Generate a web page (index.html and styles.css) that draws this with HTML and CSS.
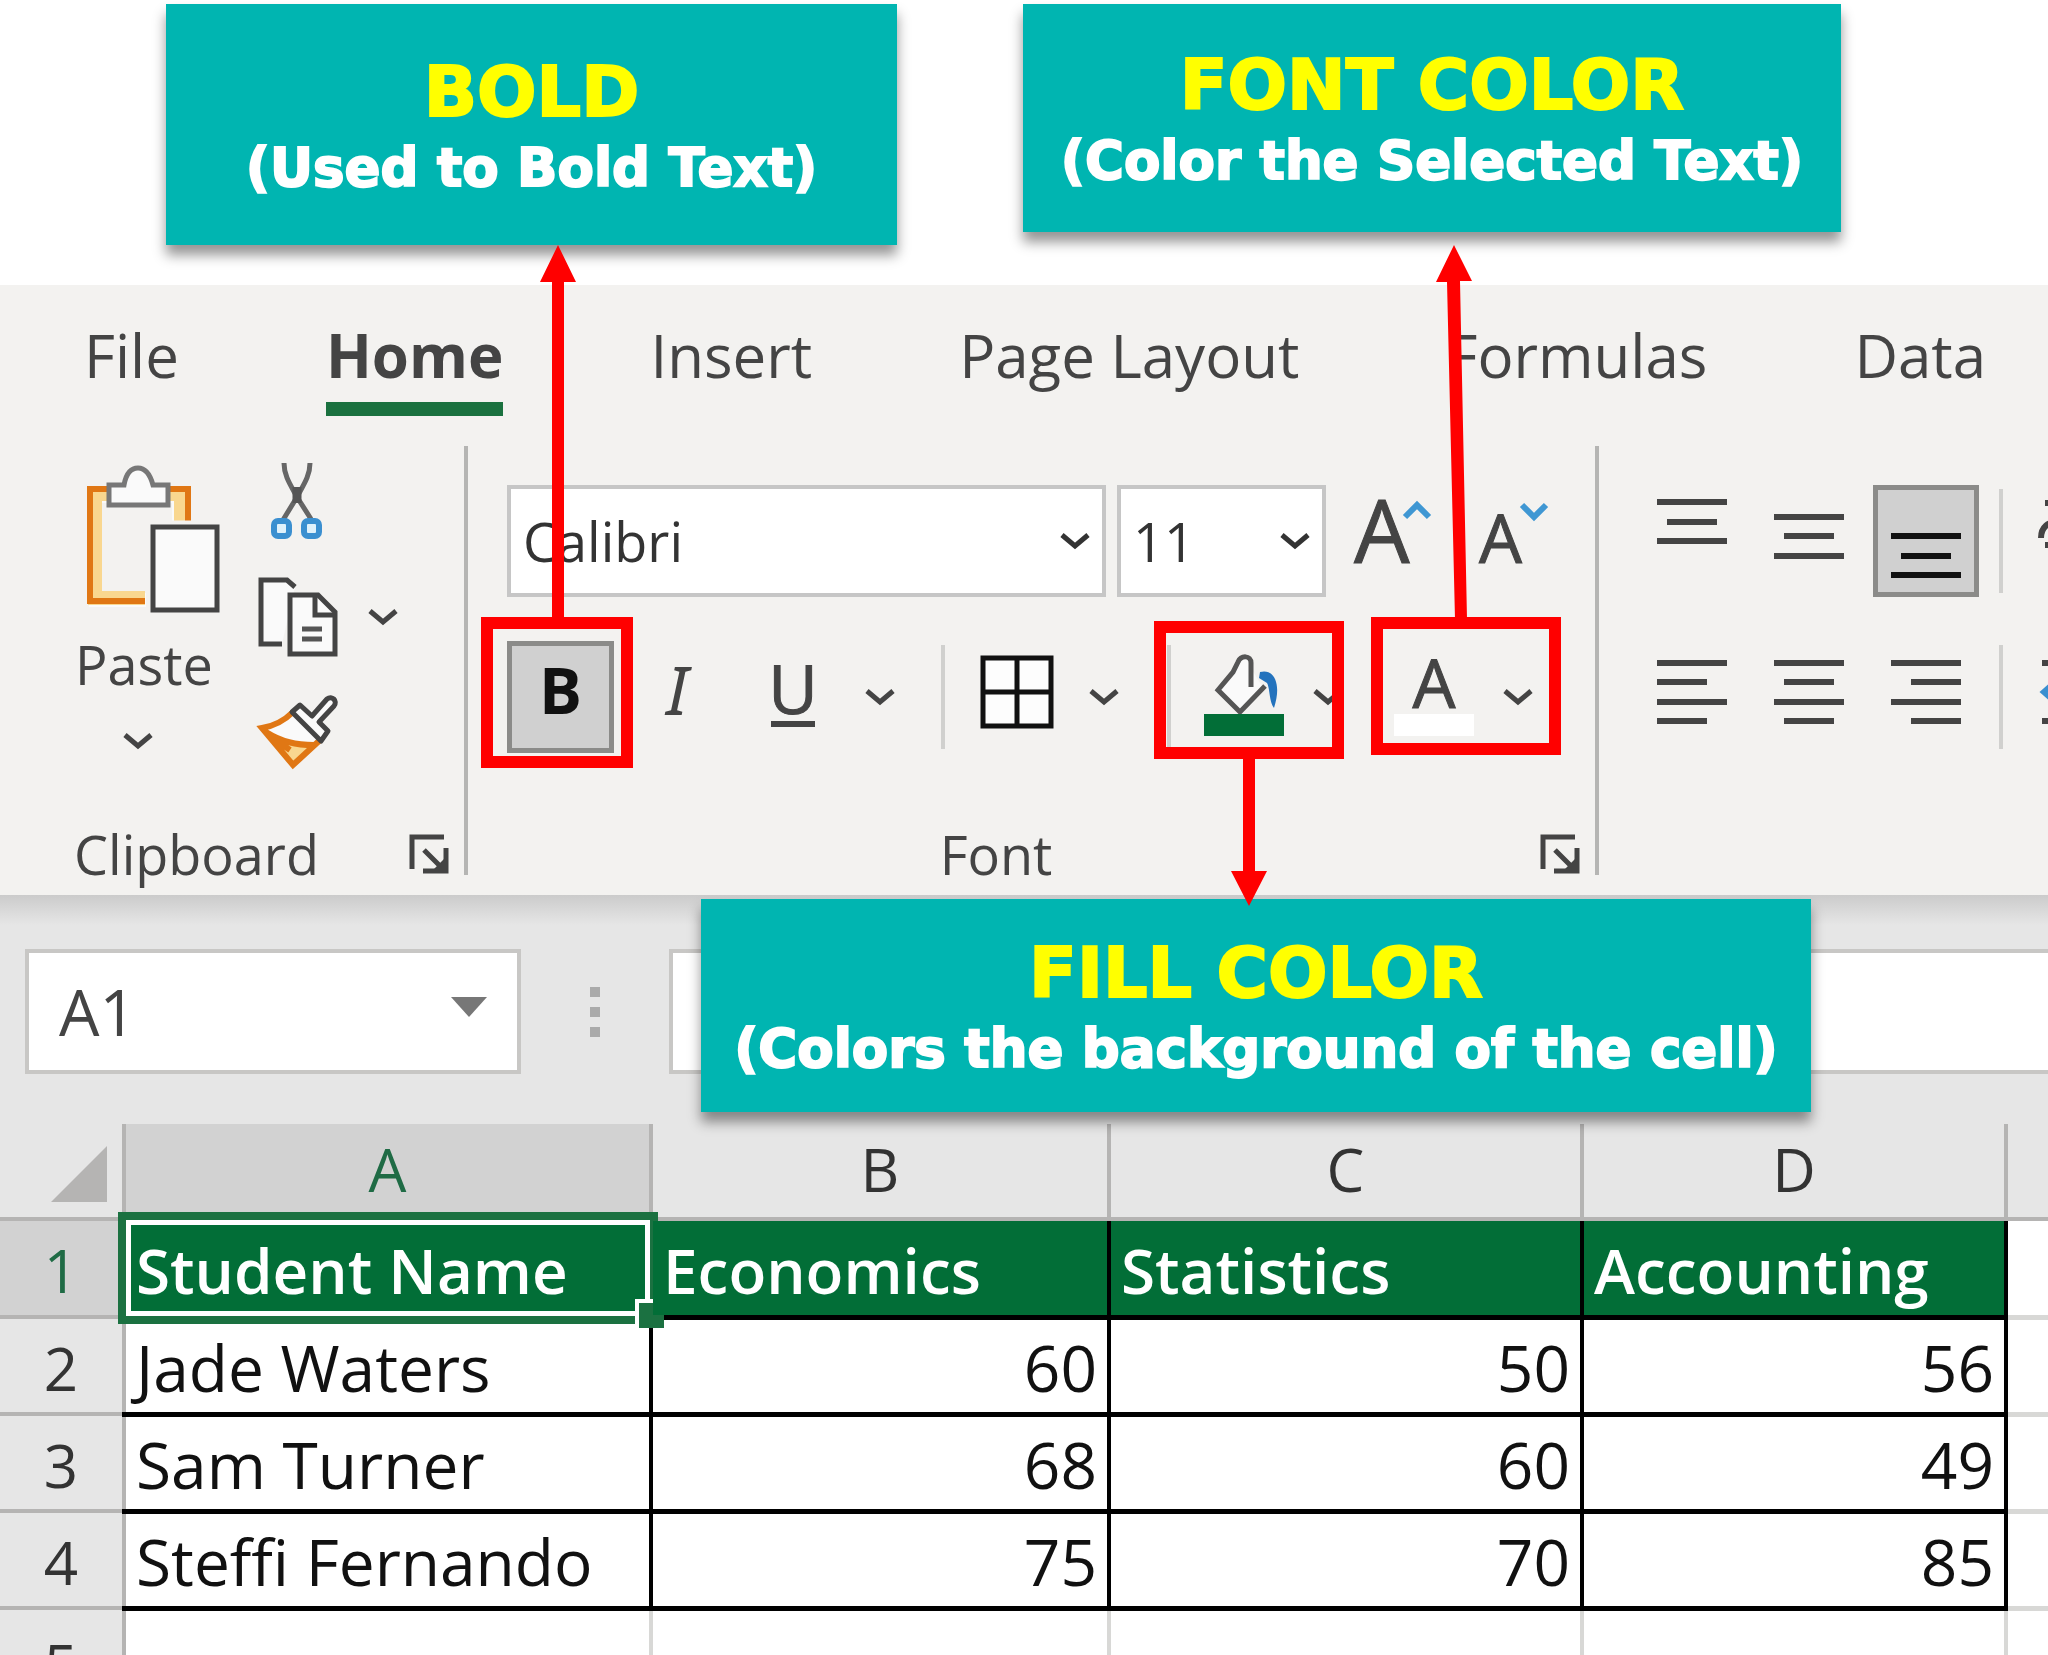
FILE: index.html
```html
<!DOCTYPE html>
<html lang="en">
<head>
<meta charset="utf-8">
<title>Excel font tools</title>
<link rel="stylesheet" href="styles.css">
</head>
<body>
<svg class="defs" aria-hidden="true">
  <symbol id="chevron" viewBox="0 0 30 18"><path d="M2 3l13 11L28 3" fill="none" stroke="currentColor" stroke-width="5"/></symbol>
  <symbol id="launcher" viewBox="0 0 40 40"><path d="M3 35V3h32M15 16l20 20M37 14v23H14" fill="none" stroke="currentColor" stroke-width="5"/><path d="M38 22v16H22z" fill="currentColor"/></symbol>
</svg>
<div class="app">
  <header class="notes">
    <section class="callout callout-bold"><h2>BOLD</h2><p>(Used to Bold Text)</p></section>
    <section class="callout callout-font"><h2>FONT COLOR</h2><p>(Color the Selected Text)</p></section>
  </header>

  <div class="ribbon">
    <nav class="tabs">
      <a href="#file">File</a>
      <a href="#home" class="active">Home</a>
      <a href="#insert">Insert</a>
      <a href="#layout">Page Layout</a>
      <a href="#formulas">Formulas</a>
      <a href="#data">Data</a>
    </nav>
    <div class="groups">
      <section class="group clipboard">
        <div class="clip-tools">
          <button class="paste" type="button">
            <svg width="152" height="150" viewBox="-18 0 152 150" aria-hidden="true">
              <path d="M3 26h98v36H86V40H16v90h44v14H3z" fill="#fafafa"/>
              <path d="M95 59V31H9v104h50" fill="none" stroke="#f9d78f" stroke-width="14"/>
              <path d="M102 59V26H4v112h55" fill="none" stroke="#e07714" stroke-width="6"/>
              <path d="M23 42V22h15C40 11 45 5 52 5s12 6 15 17h15v20z" fill="#fafafa" stroke="#777" stroke-width="5"/>
              <path d="M67 64h64v83H67z" fill="#fafafa" stroke="#f3f2f0" stroke-width="13"/>
              <path d="M67 64h64v83H67z" fill="#fafafa" stroke="#444" stroke-width="5"/>
            </svg>
            <span>Paste</span>
            <svg width="42" height="18" viewBox="0 0 42 18" aria-hidden="true"><path d="M2 3l13 11L28 3" fill="none" stroke="currentColor" stroke-width="5"/></svg>
          </button>
          <div class="clip-small">
            <button type="button" aria-label="Cut">
              <svg width="84" height="80" viewBox="0 0 84 80" aria-hidden="true">
                <path d="M28 3c0 14 8 24 13 34l14 22M54 3c0 14-8 24-13 34L27 60" fill="none" stroke="#666" stroke-width="5"/>
                <path d="M41 27v16" stroke="#555" stroke-width="9"/>
                <rect x="18" y="61" width="15" height="15" rx="4" fill="#dff1fb" stroke="#3a8fd0" stroke-width="6"/>
                <rect x="48" y="61" width="15" height="15" rx="4" fill="#dff1fb" stroke="#3a8fd0" stroke-width="6"/>
              </svg>
            </button>
            <button type="button" aria-label="Copy" class="copy">
              <svg width="84" height="80" viewBox="0 0 84 80" aria-hidden="true">
                <path d="M26 67H5V3h26l8 7" fill="#fafafa" stroke="#444" stroke-width="5"/>
                <path d="M34 18h28l17 17v42H34z" fill="#fafafa" stroke="#444" stroke-width="5"/>
                <path d="M59 18v20h20" fill="none" stroke="#444" stroke-width="5"/>
                <path d="M46 52h20M46 62h20" stroke="#555" stroke-width="5"/>
              </svg>
              <svg width="30" height="18" aria-hidden="true"><use href="#chevron"/></svg>
            </button>
            <button type="button" aria-label="Format Painter">
              <svg width="84" height="80" viewBox="0 0 84 80" aria-hidden="true">
                <path d="M37 18C28 27 18 32 6 34l31 37 26-24z" fill="#fafafa"/>
                <path d="M12 40c16 9 30 11 46 10L38 69z" fill="#f9d78f"/>
                <path d="M37 18C28 27 18 32 6 34l31 37 26-24M10 38c16 10 30 13 48 13M12 41l22 15" fill="none" stroke="#e07714" stroke-width="6"/>
                <path d="M36 18l8-7 12 11 15-17c5-4 11 2 7 7L63 28l9 9-7 10z" fill="#fafafa" stroke="#444" stroke-width="5" stroke-linejoin="round"/>
              </svg>
            </button>
          </div>
        </div>
        <footer class="group-label"><span>Clipboard</span><button type="button" aria-label="Clipboard settings"><svg width="40" height="40" aria-hidden="true"><use href="#launcher"/></svg></button></footer>
      </section>

      <div class="divider"></div>

      <section class="group font">
        <div class="font-row">
          <label class="combo combo-name"><select aria-label="Font"><option>Calibri</option></select><svg width="30" height="18" aria-hidden="true"><use href="#chevron"/></svg></label>
          <label class="combo combo-size"><select aria-label="Font size"><option>11</option></select><svg width="30" height="18" aria-hidden="true"><use href="#chevron"/></svg></label>
          <button type="button" class="grow" aria-label="Increase font size">
            <svg width="80" height="80" viewBox="0 0 80 80" aria-hidden="true"><text class="letter-big" x="0" y="70">A</text><path d="M51 24l12-12 12 12" fill="none" stroke="#3f97d3" stroke-width="6"/></svg>
          </button>
          <button type="button" class="shrink" aria-label="Decrease font size">
            <svg width="74" height="80" viewBox="0 0 74 80" aria-hidden="true"><text class="letter" x="2" y="70">A</text><path d="M45 12l12 12 12-12" fill="none" stroke="#3f97d3" stroke-width="6"/></svg>
          </button>
        </div>
        <div class="font-row">
          <div class="tool tool-bold">
            <button type="button" class="pressed" aria-label="Bold">B</button>
            <div class="marker"></div>
            <svg class="arrow" width="36" height="374" viewBox="0 0 36 374" aria-hidden="true"><path d="M18 0l18 37H24v337H12V37H0z" fill="#f00"/></svg>
          </div>
          <button type="button" class="italic" aria-label="Italic">I</button>
          <button type="button" class="underline" aria-label="Underline">
            <svg width="46" height="64" viewBox="0 0 46 64" aria-hidden="true"><text class="letter" x="23" y="49" text-anchor="middle">U</text><path d="M1 59h44" stroke="#444" stroke-width="6"/></svg>
          </button>
          <button type="button" class="more" aria-label="Underline options"><svg width="30" height="18" aria-hidden="true"><use href="#chevron"/></svg></button>
          <i class="thin"></i>
          <button type="button" class="borders" aria-label="Borders">
            <svg width="74" height="74" viewBox="0 0 74 74" aria-hidden="true"><path d="M3 3h68v68H3zM37 3v68M3 37h68" fill="#fdfdfd" stroke="#111" stroke-width="5"/></svg>
          </button>
          <button type="button" class="more-wide" aria-label="Border options"><svg width="30" height="18" aria-hidden="true"><use href="#chevron"/></svg></button>
          <i class="thin thin-near"></i>
          <div class="tool tool-fill">
            <button type="button" class="color" aria-label="Fill Color">
              <svg width="80" height="82" viewBox="0 0 80 82" aria-hidden="true">
                <path d="M46 31V10c0-8-9-9-12-2l-5 10L14 36l22 22 23-24L47 14" fill="#fafafa" stroke="none"/>
                <path d="M47 33V9c0-8-10-8-13-1l-5 10L14 36l22 22 25-26" fill="none" stroke="#555" stroke-width="5"/>
                <path d="M56 18c14-4 22 12 14 36-5-6-4-20-7-25l-8-5z" fill="#2473bd"/>
                <path d="M0 60h80v22H0z" fill="#026e37"/>
              </svg>
            </button>
            <button type="button" class="more" aria-label="Fill options"><svg width="30" height="18" aria-hidden="true"><use href="#chevron"/></svg></button>
            <div class="marker"></div>
            <svg class="arrow" width="36" height="149" viewBox="0 0 36 149" aria-hidden="true"><path d="M18 149L0 114h12V0h12v114h12z" fill="#f00"/></svg>
          </div>
          <div class="tool tool-color">
            <button type="button" class="color" aria-label="Font Color">
              <svg width="80" height="82" viewBox="0 0 80 82" aria-hidden="true"><text class="letter" x="40" y="54" text-anchor="middle">A</text><path d="M0 60h80v22H0z" fill="#fff"/></svg>
            </button>
            <button type="button" class="more" aria-label="Font color options"><svg width="30" height="18" aria-hidden="true"><use href="#chevron"/></svg></button>
            <div class="marker"></div>
            <svg class="arrow" width="36" height="374" viewBox="0 0 36 374" aria-hidden="true"><path d="M18 0l18 36H24l7 338H19L11 37H0z" fill="#f00"/></svg>
          </div>
        </div>
        <footer class="group-label"><span>Font</span><button type="button" aria-label="Font settings"><svg width="40" height="40" aria-hidden="true"><use href="#launcher"/></svg></button></footer>
      </section>

      <div class="divider"></div>

      <section class="group align">
        <div class="align-row">
          <button type="button" aria-label="Top Align"><svg width="70" height="112" viewBox="0 0 70 112" aria-hidden="true"><path d="M0 17h70M10 37h50M0 56h70"/></svg></button>
          <button type="button" aria-label="Middle Align"><svg width="70" height="112" viewBox="0 0 70 112" aria-hidden="true"><path d="M0 32h70M10 51h50M0 71h70"/></svg></button>
          <button type="button" aria-label="Bottom Align" class="pressed"><svg width="70" height="102" viewBox="0 5 70 102" aria-hidden="true"><path d="M0 51h70M10 71h50M0 90h70"/></svg></button>
          <i class="thin"></i>
          <button type="button" aria-label="Orientation" class="cut-off"><svg width="70" height="112" viewBox="0 0 70 112" aria-hidden="true"><path d="M20 38c-8-2-16 4-16 15M8 18h8M8 60h8"/></svg></button>
        </div>
        <div class="align-row">
          <button type="button" aria-label="Align Left"><svg width="70" height="112" viewBox="0 0 70 112" aria-hidden="true"><path d="M0 22h70M0 41h50M0 61h70M0 80h50"/></svg></button>
          <button type="button" aria-label="Center"><svg width="70" height="112" viewBox="0 0 70 112" aria-hidden="true"><path d="M0 22h70M10 41h50M0 61h70M10 80h50"/></svg></button>
          <button type="button" aria-label="Align Right"><svg width="70" height="112" viewBox="0 0 70 112" aria-hidden="true"><path d="M0 22h70M20 41h50M0 61h70M20 80h50"/></svg></button>
          <i class="thin"></i>
          <button type="button" aria-label="Decrease Indent" class="cut-off"><svg width="70" height="112" viewBox="0 0 70 112" aria-hidden="true"><path d="M5 22h65M5 80h65"/><path class="blue" d="M16 43L7 51l9 8"/></svg></button>
        </div>
      </section>
    </div>
  </div>

  <div class="formula-bar">
    <label class="name-box"><input type="text" value="A1" aria-label="Name box"><svg width="36" height="20" viewBox="0 0 36 20" aria-hidden="true"><path d="M0 0h36L18 20z" fill="#777"/></svg></label>
    <div class="grip"><i></i><i></i><i></i></div>
    <input class="formula" type="text" aria-label="Formula">
    <section class="callout callout-fill"><h2>FILL COLOR</h2><p>(Colors the background of the cell)</p></section>
  </div>

  <table class="sheet">
    <colgroup><col class="c-row"><col class="c-a"><col class="c-b"><col class="c-c"><col class="c-d"><col></colgroup>
    <thead>
      <tr><th class="corner"><svg width="56" height="56" viewBox="0 0 56 56" aria-hidden="true"><path d="M56 0v56H0z" fill="#b5b4b3"/></svg></th><th class="current">A</th><th>B</th><th>C</th><th>D</th><th></th></tr>
    </thead>
    <tbody>
      <tr class="titles"><th class="current">1</th><td class="selected">Student Name<div class="selection"></div></td><td>Economics</td><td>Statistics</td><td>Accounting</td><td class="blank"></td></tr>
      <tr><th>2</th><td>Jade Waters</td><td class="num">60</td><td class="num">50</td><td class="num">56</td><td class="blank"></td></tr>
      <tr><th>3</th><td>Sam Turner</td><td class="num">68</td><td class="num">60</td><td class="num">49</td><td class="blank"></td></tr>
      <tr><th>4</th><td>Steffi Fernando</td><td class="num">75</td><td class="num">70</td><td class="num">85</td><td class="blank"></td></tr>
      <tr class="empty"><th>5</th><td></td><td></td><td></td><td></td><td class="blank"></td></tr>
    </tbody>
  </table>
</div>
</body>
</html>
```
FILE: styles.css
```css
* { box-sizing: border-box; }

body {
  margin: 0;
  background: #fff;
  color: #444;
  font-family: "Open Sans", "Noto Sans", sans-serif;
}

button {
  display: flex;
  align-items: center;
  justify-content: center;
  padding: 0;
  border: 0;
  background: none;
  color: #444;
  font: inherit;
}

svg { display: block; flex: none; overflow: visible; }
.defs { position: absolute; width: 0; height: 0; }

.app {
  height: 100vh;
  overflow: hidden;
  display: flex;
  flex-direction: column;
}

/* Callouts */
.notes {
  flex: none;
  display: flex;
  align-items: flex-start;
  gap: 126px;
  height: 285px;
  padding: 4px 0 0 166px;
}

.callout {
  display: flex;
  flex-direction: column;
  align-items: center;
  justify-content: center;
  background: #00b5b1;
  box-shadow: 0 10px 12px rgba(0, 0, 0, .42);
  color: #fff;
  font-family: "DejaVu Sans", sans-serif;
  font-weight: 700;
  white-space: nowrap;
  -webkit-text-stroke: 2px currentColor;
}
.callout h2 {
  margin: 0;
  color: #ff0;
  font-size: 70px;
  font-weight: 700;
  line-height: 86px;
}
.callout p {
  margin: 0;
  font-size: 53px;
  line-height: 66px;
}
.callout-bold { width: 731px; height: 241px; }
.callout-font { width: 818px; height: 228px; }
.callout-fill {
  position: absolute;
  left: 701px;
  top: 4px;
  width: 1110px;
  height: 213px;
}

/* Ribbon */
.ribbon {
  position: relative;
  z-index: 2;
  flex: none;
  background: #f3f2f0;
}

.tabs {
  display: flex;
  gap: 147px;
  padding: 30px 0 14px 84px;
}
.tabs a {
  padding-bottom: 7px;
  border-bottom: 14px solid transparent;
  color: #444;
  font-size: 60px;
  line-height: 80px;
  text-decoration: none;
  white-space: nowrap;
}
.tabs .active {
  border-color: #1a713f;
  font-weight: 700;
}

.groups {
  display: flex;
  padding: 16px 0 15px;
}
.group {
  flex: none;
  display: flex;
  flex-direction: column;
  height: 434px;
}
.divider {
  flex: none;
  width: 4px;
  height: 429px;
  background: #b5b5b3;
}
.group-label {
  display: flex;
  align-items: center;
  gap: 16px;
  margin-top: auto;
  padding-right: 15px;
  font-size: 54px;
  line-height: 52px;
}
.group-label span { flex: 1; text-align: center; }

.clipboard { width: 464px; }
.clip-tools { display: flex; gap: 36px; padding: 14px 0 0 68px; }
.paste {
  flex-direction: column;
  justify-content: flex-start;
  width: 152px;
  padding-top: 3px;
  font-size: 54px;
  line-height: 54px;
}
.paste span { margin: 24px 0 41px; }
.clip-small { display: flex; flex-direction: column; gap: 37px; align-items: flex-start; }
.copy { gap: 28px; }

.font { width: 1127px; padding-top: 39px; }
.font-row { display: flex; height: 112px; padding-left: 39px; }
.font-row + .font-row { margin-top: 44px; }

.combo {
  display: flex;
  align-items: center;
  margin-right: 11px;
  padding-right: 12px;
  border: 4px solid #c6c6c6;
  background: #fff;
  color: #333;
}
.combo select {
  flex: 1;
  min-width: 0;
  padding: 0 0 0 12px;
  border: 0;
  appearance: none;
  background: none;
  color: #333;
  font: 54px/80px "Open Sans", "Noto Sans", sans-serif;
}
.combo-name { width: 599px; }
.combo-size { width: 209px; }

.grow { width: 80px; margin-left: 17px; align-items: flex-start; padding-top: 8px; }
.shrink { width: 74px; margin-left: 43px; align-items: flex-start; padding-top: 8px; }
.letter, .letter-big { fill: #444; stroke: #444; stroke-width: 1px; font-family: "Open Sans", "Noto Sans", sans-serif; font-size: 68px; }
.letter-big { font-size: 88px; }

.pressed { border: 5px solid #8b8b89; background: #d0d0d0; color: #111; }
.tool { position: relative; display: flex; }
.tool-bold button {
  width: 107px;
  padding-bottom: 14px;
  font-size: 64px;
  font-weight: 700;
  line-height: 64px;
}
.italic {
  width: 116px;
  margin-left: 5px;
  padding-bottom: 16px;
  font-family: "Noto Sans", sans-serif;
  font-size: 68px;
  font-style: italic;
  line-height: 68px;
}
.underline { width: 116px; }
.more { width: 58px; }
.more-wide { width: 94px; }
.borders { width: 80px; padding-bottom: 10px; }
.color { width: 114px; padding-bottom: 4px; }
.tool-fill .more { width: 54px; }
.tool-color .color { width: 78px; }
.tool-color .more { width: 90px; }
.tool-color { margin-left: 40px; }

.thin {
  flex: none;
  width: 4px;
  height: 104px;
  margin: 4px 32px 0;
  background: #d0d0ce;
}
.thin-near { margin: 4px 16px 0; }

/* Red annotation frames and arrows lie over the tools */
.marker { position: absolute; width: 190px; height: 138px; border: 12px solid #f00; }
.arrow { position: absolute; }
.tool-bold .marker { left: -26px; top: -24px; width: 152px; height: 151px; }
.tool-bold .arrow { left: 33px; top: -396px; }
.tool-fill .marker { left: -33px; top: -20px; }
.tool-fill .arrow { left: 44px; top: 116px; }
.tool-color .marker { left: -24px; top: -24px; }
.tool-color .arrow { left: 41px; top: -396px; }

.align { padding-top: 39px; }
.align-row { display: flex; height: 112px; padding-left: 40px; }
.align-row + .align-row { margin-top: 44px; }
.align-row button { flex: none; width: 106px; margin-right: 11px; }
.align-row path { fill: none; stroke: #444; stroke-width: 6; }
.align-row .pressed path { stroke: #111; }
.align-row .blue { stroke: #3a8fd0; }
.align-row .thin { margin: 4px 34px 0 9px; }
.align-row .cut-off { width: 70px; }

/* Name box and formula bar */
.formula-bar {
  position: relative;
  z-index: 1;
  flex: none;
  display: flex;
  align-items: center;
  height: 229px;
  padding: 4px 0 0 25px;
  background: linear-gradient(#cbcbcb, #e6e6e6 30px);
}
.name-box {
  display: flex;
  align-items: center;
  width: 496px;
  height: 125px;
  padding: 0 30px;
  border: 4px solid #c8c7c5;
  background: #fff;
}
.name-box svg { margin-bottom: 10px; }
.name-box input {
  flex: 1;
  min-width: 0;
  padding: 0;
  border: 0;
  background: none;
  color: #444;
  font: 64px/80px "Open Sans", "Noto Sans", sans-serif;
}
.grip {
  display: flex;
  flex-direction: column;
  gap: 10px;
  margin: 0 69px;
}
.grip i { width: 10px; height: 10px; background: #aaa; }
.formula {
  flex: 1;
  height: 125px;
  border: 4px solid #c8c7c5;
  border-right: 0;
  background: #fff;
}

/* Worksheet */
.sheet {
  flex: none;
  width: 100%;
  table-layout: fixed;
  border-collapse: collapse;
  color: #111;
  font-size: 64px;
  line-height: 80px;
}
.c-row { width: 124px; }
.c-a { width: 527px; }
.c-b { width: 458px; }
.c-c { width: 473px; }
.c-d { width: 424px; }

.sheet tr { height: 97px; }
.sheet thead tr { height: 95px; }
.sheet .titles { height: 98px; }
.sheet th {
  padding: 4px 0 0;
  background: #e6e6e6;
  color: #333;
  font-size: 60px;
  font-weight: 400;
  border-right: 4px solid #b5b4b3;
  border-bottom: 4px solid #b5b4b3;
}
.sheet thead th { padding: 0 0 4px; }
.sheet thead th:last-child { border-right: 0; }
.corner svg { margin: 10px 0 0 51px; }
.sheet .current { background: #d2d2d2; color: #1f6b45; }
.sheet td {
  position: relative;
  padding: 4px 10px 0;
  border: solid #000;
  border-width: 5px 4px;
  white-space: nowrap;
}
.sheet td:nth-child(2) { border-left-color: #999; }
.sheet .num { text-align: right; }
.sheet .titles td {
  background: #026e37;
  color: #fff;
  font-size: 62px;
  font-weight: 600;
  border-top: 4px solid #777;
}
.sheet .blank {
  background: #fff;
  border-color: #d8d8d6;
  border-right: 0;
  border-left-color: #000;
}
.sheet .titles .blank { background: #fff; border-top-color: #b5b4b3; }
.empty td { border-color: #000 #d8d8d6 #d8d8d6; }
.empty .blank { border-left-color: #d8d8d6; }
.sheet tr.empty { height: 110px; }

.selection {
  position: absolute;
  inset: -9px -9px -9px -8px;
  border: 8px solid #1b7141;
  box-shadow: inset 0 0 0 5px #fff;
}
.selection::after {
  content: "";
  position: absolute;
  right: -14px;
  bottom: -12px;
  width: 25px;
  height: 25px;
  border: solid #fff;
  border-width: 4px 0 0 4px;
  background: #1b7141;
}
```
